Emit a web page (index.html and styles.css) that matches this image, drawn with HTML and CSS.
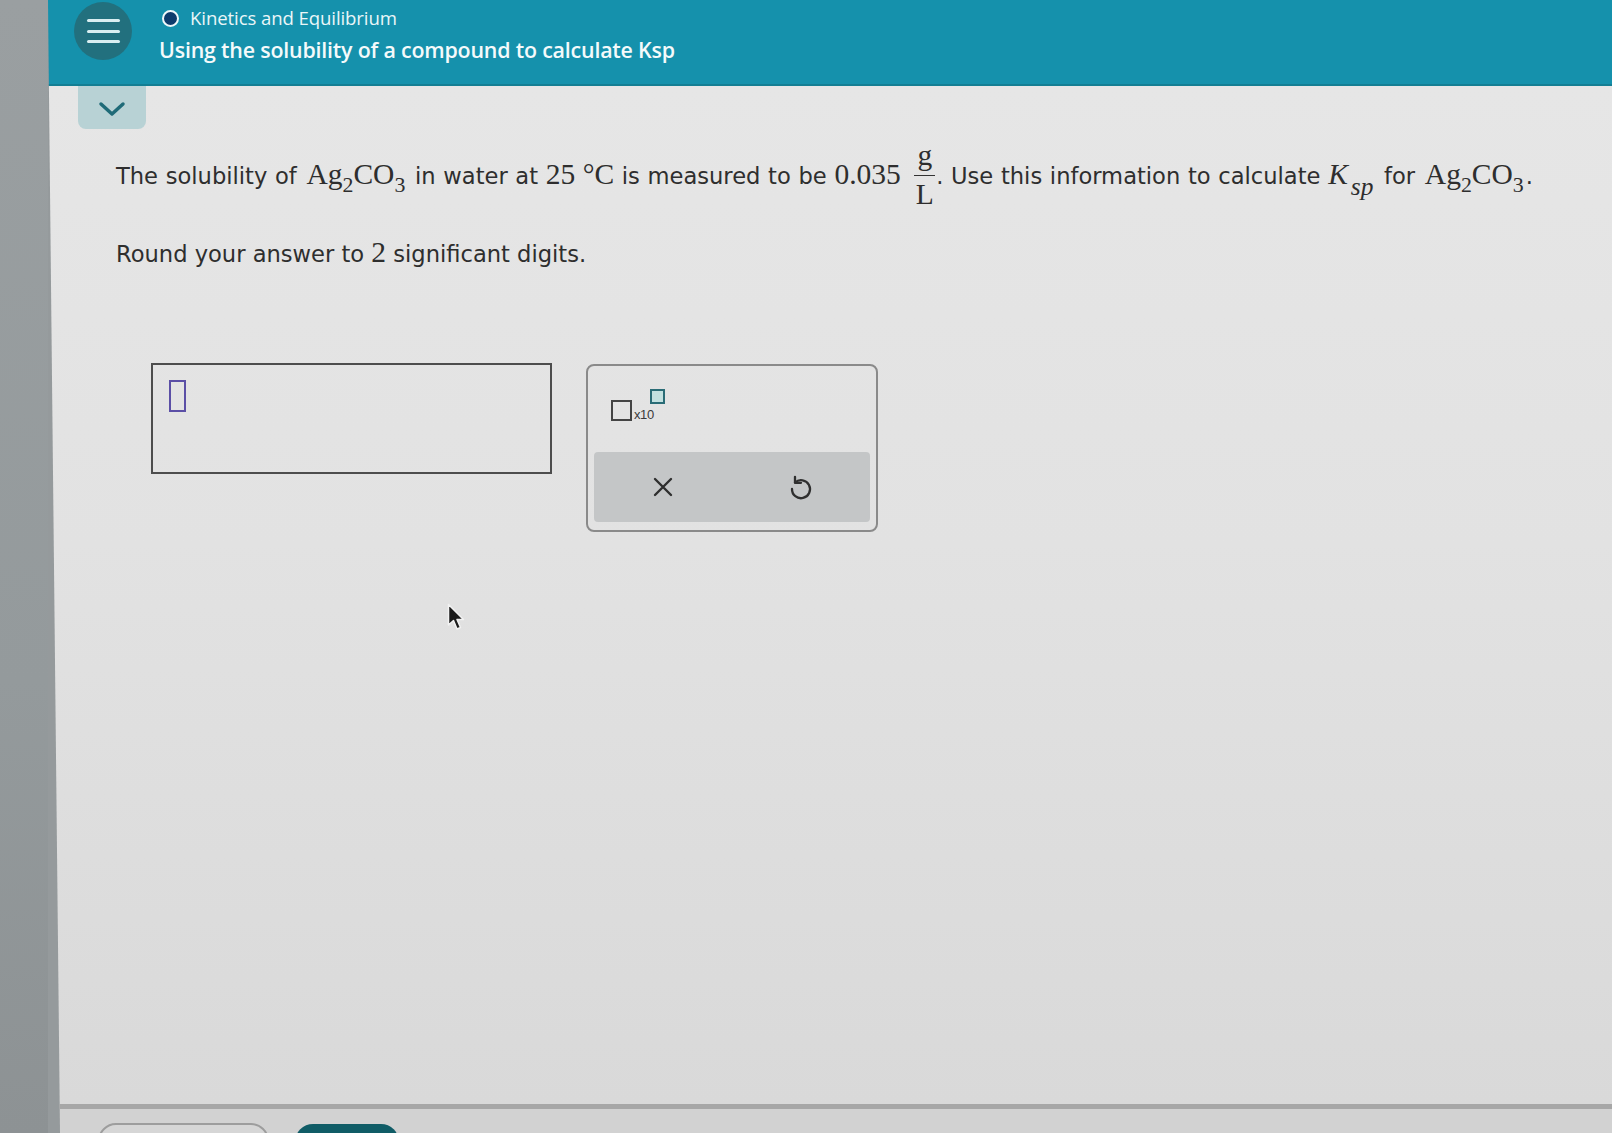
FILE: index.html
```html
<!DOCTYPE html>
<html lang="en">
<head>
<meta charset="utf-8">
<title>Using the solubility of a compound to calculate Ksp</title>
<link rel="stylesheet" href="styles.css">
</head>
<body>
<div class="screen">
  <div class="bezel"></div>
  <div class="app">
    <header class="topbar">
      <button class="menu-btn" aria-label="Menu">
        <span></span><span></span><span></span>
      </button>
      <div class="titles">
        <div class="crumb"><span class="crumb-dot"></span>Kinetics and Equilibrium</div>
        <h1 class="topic">Using the solubility of a compound to calculate Ksp</h1>
      </div>
    </header>

    <main class="work">
      <div class="tab">
        <svg width="28" height="16" viewBox="0 0 28 16"><path d="M3 3 L14 13 L25 3" fill="none" stroke="#1f6b78" stroke-width="3.5" stroke-linecap="round" stroke-linejoin="round"/></svg>
      </div>

      <p class="question">The solubility of <span class="m chem">Ag<sub>2</sub>CO<sub>3</sub></span> in water at <span class="m">25 °C</span> is measured to be <span class="m">0.035</span> <span class="frac"><span class="num">g</span><span class="den">L</span></span>. Use this information to calculate <span class="m"><i>K</i><sub class="isub"><i>sp</i></sub></span> for <span class="m chem">Ag<sub>2</sub>CO<sub>3</sub></span>.</p>

      <p class="note">Round your answer to <span class="m">2</span> significant digits.</p>

      <div class="answer">
        <div class="input-box"><span class="caret-box"></span></div>
        <div class="tools">
          <div class="sci">
            <span class="sq"></span><span class="x10">x10</span><span class="sq-sup"></span>
          </div>
          <div class="actions">
            <svg class="act-clear" width="22" height="22" viewBox="0 0 22 22"><path d="M3 3 L19 19 M19 3 L3 19" stroke="#2f2f2f" stroke-width="2.4" stroke-linecap="round"/></svg>
            <svg class="act-undo" width="26" height="28" viewBox="0 0 26 28"><path d="M8 7.5 A9 9 0 1 1 5 14" fill="none" stroke="#2f2f2f" stroke-width="2.3" stroke-linecap="round"/><path d="M8 1.8 L8 7.8 L14 7.8" fill="none" stroke="#2f2f2f" stroke-width="2.3" stroke-linecap="round" stroke-linejoin="round"/></svg>
          </div>
        </div>
      </div>

      <svg class="pointer" width="20" height="30" viewBox="0 0 20 30"><path d="M1.5 1.5 L1.5 22 L6.5 17.5 L10 26 L13.5 24.5 L10 16.5 L16.5 16.5 Z" fill="#1c1c1c" stroke="#f2f2f2" stroke-width="1.5" stroke-linejoin="round"/></svg>
    </main>

    <footer class="bottombar">
      <button class="btn-outline"></button>
      <button class="btn-solid"></button>
    </footer>
  </div>
</div>
</body>
</html>
```

FILE: styles.css
```css
* { box-sizing: border-box; }

html, body {
  margin: 0;
  height: 100%;
}

body {
  background: #959a9c;
  overflow: hidden;
}

.screen {
  display: flex;
  width: 1612px;
  height: 1133px;
}

.bezel {
  width: 48px;
  flex: none;
  background: linear-gradient(180deg, #9a9fa1 0%, #949a9c 60%, #8d9294 100%);
}

.app {
  flex: 1;
  display: flex;
  flex-direction: column;
  position: relative;
  clip-path: polygon(0 0, 100% 0, 100% 100%, 12px 100%);
}

/* ---------- top bar ---------- */
.topbar {
  height: 86px;
  flex: none;
  display: flex;
  align-items: flex-start;
  padding-left: 26px;
  background: #1591ac;
  border-bottom: 2px solid #137e93;
}

.menu-btn {
  width: 58px;
  height: 58px;
  margin-top: 2px;
  border: none;
  border-radius: 50%;
  background: #22707e;
  display: flex;
  flex-direction: column;
  align-items: center;
  justify-content: center;
  gap: 7.5px;
  padding: 0;
}

.menu-btn span {
  display: block;
  width: 33px;
  height: 3px;
  border-radius: 2px;
  background: #d9eef1;
}

.titles {
  margin-left: 27px;
  padding-top: 5px;
  font-family: "Open Sans", "Liberation Sans", sans-serif;
  color: #eaf6f8;
}

.crumb {
  display: flex;
  align-items: center;
  font-size: 18.6px;
  line-height: 26px;
  margin-left: 3px;
  letter-spacing: -0.1px;
}

.crumb-dot {
  width: 17px;
  height: 17px;
  border-radius: 50%;
  background: #0e3c6c;
  border: 2.5px solid #eef7f9;
  margin-right: 11px;
}

.topic {
  margin: 5px 0 0;
  font-size: 21.4px;
  font-weight: 600;
  line-height: 28px;
  letter-spacing: -0.2px;
  color: #f4fafb;
}

/* ---------- work area ---------- */
.work {
  flex: 1;
  position: relative;
  padding-left: 68px;
  background: linear-gradient(180deg, #e6e6e6 0%, #e2e2e2 45%, #d9d9d9 100%);
  color: #2e2e2e;
  font-family: "DejaVu Sans", Verdana, sans-serif;
}

.tab {
  width: 68px;
  height: 43px;
  margin-left: -38px;
  background: #b8d2d5;
  border-radius: 0 0 8px 8px;
  display: flex;
  align-items: center;
  justify-content: center;
  padding-top: 2px;
}

.question {
  margin: 13px 0 0;
  font-size: 22.6px;
  line-height: 58px;
  white-space: nowrap;
  word-spacing: 0.5px;
}

.note {
  margin: 23px 0 0;
  font-size: 22.6px;
  line-height: 32px;
}

.m {
  font-family: "Liberation Serif", "Times New Roman", serif;
  font-size: 29.5px;
  word-spacing: 0;
}

.chem {
  margin: 0 2px;
}

.m sub {
  font-size: 0.74em;
  vertical-align: -0.36em;
  line-height: 0;
}

.m .isub {
  font-size: 0.86em;
  margin-left: 3px;
  margin-right: 3px;
  vertical-align: -0.42em;
}

.frac {
  display: inline-flex;
  flex-direction: column;
  align-items: center;
  vertical-align: middle;
  font-family: "Liberation Serif", "Times New Roman", serif;
  font-size: 29.5px;
  line-height: 32px;
  margin: 0 1px 0 6px;
  position: relative;
  top: -3px;
}

.frac .num {
  padding: 0 3px 4px;
  border-bottom: 1.5px solid #333;
}

.frac .den {
  padding-top: 2px;
}

/* ---------- answer area ---------- */
.answer {
  display: flex;
  align-items: flex-start;
  gap: 34px;
  margin: 93px 0 0 35px;
}

.input-box {
  width: 401px;
  height: 111px;
  border: 2px solid #4d4d4d;
  padding: 15px 0 0 16px;
}

.caret-box {
  display: block;
  width: 17px;
  height: 32px;
  border: 2.5px solid #5b4fa6;
}

.tools {
  width: 292px;
  height: 168px;
  border: 2px solid #8a8a8a;
  border-radius: 8px;
  padding: 0 6px;
  margin-top: 1px;
  display: flex;
  flex-direction: column;
}

.sci {
  display: flex;
  align-items: flex-start;
  height: 86px;
  padding: 23px 0 0 17px;
}

.sq {
  width: 21px;
  height: 21px;
  border: 2px solid #444;
  margin-top: 11px;
}

.x10 {
  font-family: "Liberation Sans", Arial, sans-serif;
  font-size: 13px;
  color: #3a3a3a;
  margin: 18px 0 0 2px;
  letter-spacing: -0.4px;
}

.sq-sup {
  width: 15px;
  height: 15px;
  border: 2px solid #2a6c76;
  background: #c3e1e0;
  margin-left: -4px;
}

.actions {
  height: 70px;
  border-radius: 4px;
  background: #c4c6c7;
  display: flex;
  align-items: center;
  padding: 0 0 0 58px;
}

.act-undo {
  margin-left: 113px;
  margin-top: 4px;
}

.pointer {
  position: absolute;
  left: 399px;
  top: 517px;
}

/* ---------- bottom bar ---------- */
.bottombar {
  height: 29px;
  flex: none;
  display: flex;
  align-items: flex-start;
  gap: 26px;
  padding: 14px 0 0 50px;
  background: #d2d2d2;
  border-top: 5px solid #a7a7a7;
  overflow: hidden;
}

.btn-outline {
  width: 171px;
  height: 40px;
  border: 2px solid #9d9d9d;
  border-radius: 18px;
  background: #d6d6d6;
}

.btn-solid {
  width: 104px;
  height: 40px;
  margin-top: 1px;
  border: none;
  border-radius: 18px;
  background: #105c66;
}
```
